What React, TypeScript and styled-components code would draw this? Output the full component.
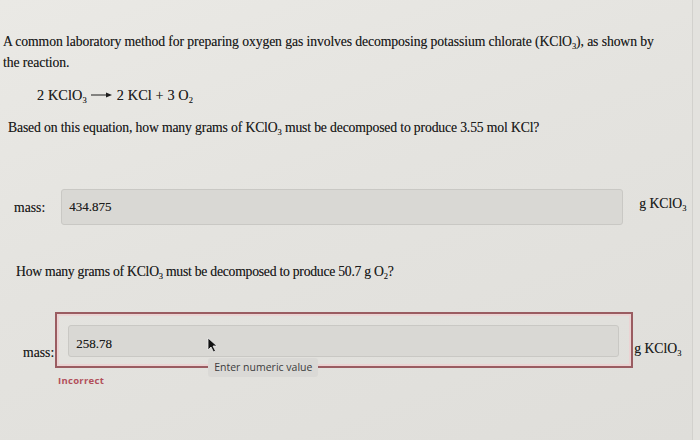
import React from "react"
import styled, { createGlobalStyle } from "styled-components"

const GlobalStyle = createGlobalStyle`
  html, body {
    margin: 0;
    padding: 0;
    background: #e3e2de;
  }
`

const Page = styled.div`
  position: relative;
  width: 692px;
  height: 440px;
  overflow: hidden;
  border-right: 1px solid #d2d1cd;
  background: linear-gradient(160deg, #eae9e5 0%, #e4e3df 45%, #dfdeda 100%);
  font-family: "Liberation Serif", "Times New Roman", serif;
  font-size: 13.7px;
  color: #1e1e1e;
  text-shadow: 0 0 0.4px rgba(0, 0, 0, 0.45);
`

const Text = styled.p<{ indent: number; top: number; spacing?: number; size?: number }>`
  margin: ${(p) => p.top}px 36px 0 ${(p) => p.indent}px;
  line-height: 21px;
  font-size: ${(p) => p.size || 13.7}px;
  letter-spacing: ${(p) => (p.spacing === undefined ? -0.1 : p.spacing)}px;
`

const Sub = styled.sub`
  font-size: 8.5px;
  vertical-align: -3px;
  line-height: 0;
`

const ArrowIcon = styled.svg`
  width: 21px;
  height: 8px;
  margin: 0 5px 0 4px;
  vertical-align: 1px;
`

const Row = styled.div<{ indent: number; top: number; gap: number; align: string }>`
  display: flex;
  align-items: ${(p) => p.align};
  gap: ${(p) => p.gap}px;
  margin-top: ${(p) => p.top}px;
  padding-left: ${(p) => p.indent}px;
`

const Side = styled.span<{ pad: string }>`
  padding: ${(p) => p.pad};
  white-space: nowrap;
  line-height: 15px;
`

const Input = styled.div<{ width: number; height: number; drop?: number }>`
  box-sizing: border-box;
  width: ${(p) => p.width}px;
  height: ${(p) => p.height}px;
  padding: ${(p) => p.drop || 0}px 7px 0;
  display: flex;
  align-items: center;
  background: #d9d8d4;
  border: 1px solid #c9c8c4;
  border-radius: 3px;
  font-size: 13px;
`

const ErrorFrame = styled.div`
  position: relative;
  box-sizing: border-box;
  width: 578px;
  height: 56px;
  padding: 11px 0 0 11px;
  border: 2px solid #9a5c61;
  box-shadow: inset 0 0 0 2px #ebd3d3;
`

const Tooltip = styled.div`
  position: absolute;
  left: 151px;
  bottom: -11px;
  padding: 2px 6px 3px;
  background: #dad9d6;
  border-radius: 3px;
  font-family: "Open Sans", "Liberation Sans", sans-serif;
  font-size: 10.5px;
  color: #3c3c3c;
  text-shadow: none;
  white-space: nowrap;
`

const Cursor = styled.svg`
  position: absolute;
  left: 150px;
  top: 23px;
  width: 11px;
  height: 16px;
`

const Feedback = styled.div`
  margin: 6px 0 0 58px;
  font-family: "Open Sans", "Liberation Sans", sans-serif;
  font-size: 9.5px;
  font-weight: 700;
  letter-spacing: 0.3px;
  color: #b24f5a;
  text-shadow: none;
`

const KClO3 = () => (
  <>
    KClO<Sub>3</Sub>
  </>
)

export default function App() {
  return (
    <>
      <GlobalStyle />
      <Page>
        <Text indent={3} top={31}>
          A common laboratory method for preparing oxygen gas involves decomposing potassium chlorate (
          <KClO3 />
          ), as shown by the reaction.
        </Text>
        <Text indent={37} top={12} size={14.3} spacing={0.1}>
          2 <KClO3 />
          <ArrowIcon viewBox="0 0 21 8">
            <path d="M0 4 H18" stroke="#1e1e1e" strokeWidth="1" />
            <path d="M15 1.5 L21 4 L15 6.5 Z" fill="#1e1e1e" />
          </ArrowIcon>
          2 KCl + 3 O<Sub>2</Sub>
        </Text>
        <Text indent={8} top={11} spacing={-0.15}>
          Based on this equation, how many grams of <KClO3 /> must be decomposed to produce 3.55 mol KCl?
        </Text>

        <Row indent={14} top={51} gap={16} align="center">
          <Side pad="0">mass:</Side>
          <Input width={562} height={36}>
            434.875
          </Input>
          <Side pad="0 0 8px">
            g <KClO3 />
          </Side>
        </Row>

        <Text indent={16} top={36} spacing={-0.25}>
          How many grams of <KClO3 /> must be decomposed to produce 50.7 g O<Sub>2</Sub>?
        </Text>

        <Row indent={23} top={30} gap={1} align="flex-end">
          <Side pad="0 0 8px">mass:</Side>
          <ErrorFrame>
            <Input width={551} height={32} drop={5}>
              258.78
            </Input>
            <Cursor viewBox="0 0 11 16">
              <path d="M1 1 L1 13 L4 10 L6.5 15 L8.5 14 L6 9 L10 9 Z" fill="#111" stroke="#eee" strokeWidth="0.8" />
            </Cursor>
            <Tooltip>Enter numeric value</Tooltip>
          </ErrorFrame>
          <Side pad="0 0 12px">
            g <KClO3 />
          </Side>
        </Row>
        <Feedback>Incorrect</Feedback>
      </Page>
    </>
  )
}
